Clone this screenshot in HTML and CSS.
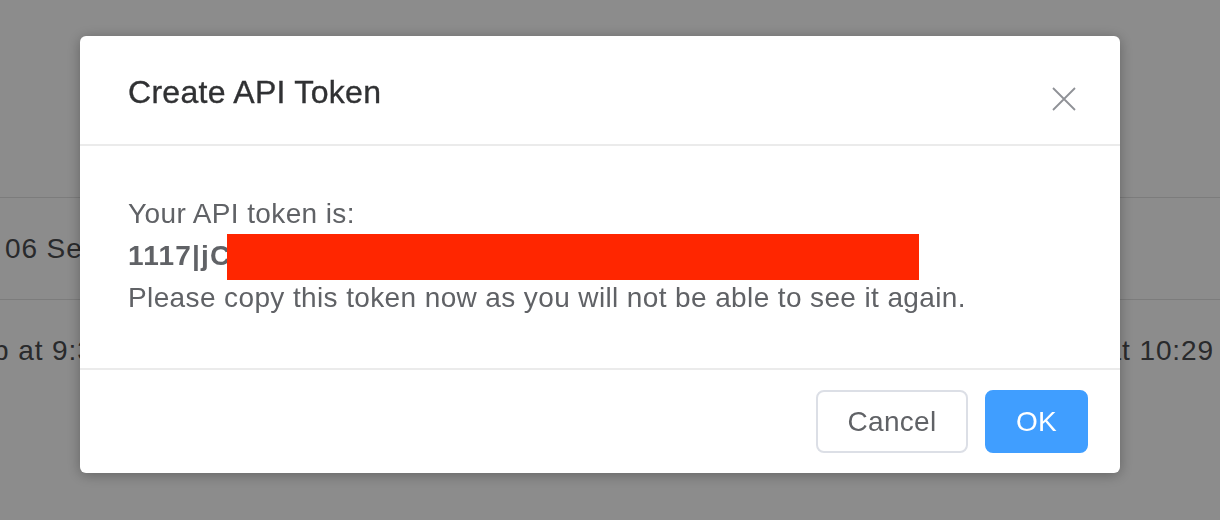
FILE: index.html
```html
<!DOCTYPE html>
<html lang="en">
<head>
<meta charset="utf-8">
<title>Create API Token</title>
<link rel="stylesheet" href="styles.css">
</head>
<body>
<div class="page">
  <div class="table">
    <div class="table-top"></div>
    <div class="row">
      <div class="cell cell-left">06 Sep 2023</div>
      <div class="cell cell-right"></div>
    </div>
    <div class="row">
      <div class="cell cell-left"><span class="shift">Sep at 9:30 AM</span></div>
      <div class="cell cell-right">06 Sep at 10:29</div>
    </div>
  </div>
</div>
<div class="overlay">
  <div class="dialog" role="dialog" aria-label="Create API Token">
    <div class="dialog-header">
      <span class="dialog-title">Create API Token</span>
      <button class="dialog-close" aria-label="Close">
        <svg width="24" height="24" viewBox="0 0 24 24"><path d="M1 1 L23 23 M23 1 L1 23" stroke="#8f9196" stroke-width="1.8" fill="none"/></svg>
      </button>
    </div>
    <div class="dialog-body">
      <div class="line">Your API token is:</div>
      <div class="line token"><strong>1117|jC</strong><span class="redact"></span></div>
      <div class="line">Please copy this token now as you will not be able to see it again.</div>
    </div>
    <div class="dialog-footer">
      <button class="btn btn-default">Cancel</button>
      <button class="btn btn-primary">OK</button>
    </div>
  </div>
</div>
</body>
</html>
```
FILE: styles.css
```css
* { box-sizing: border-box; }
html, body { margin: 0; padding: 0; }
body {
  font-family: "Liberation Sans", Arial, sans-serif;
  background: #ffffff;
  width: 1220px;
  height: 520px;
  overflow: hidden;
}
.page { width: 1220px; height: 520px; }
.table-top { height: 197px; }
.row {
  height: 102px;
  border-top: 1px solid #e2e2e2;
  display: flex;
  justify-content: space-between;
  align-items: center;
  font-size: 28px;
  letter-spacing: 0.9px;
  color: #4c4d50;
  overflow: hidden;
}
.cell-left { padding-left: 5px; white-space: nowrap; overflow: hidden; }
.cell-right { padding-right: 6px; white-space: nowrap; }
.shift { display: inline-block; margin-left: -48px; }

.overlay {
  position: fixed;
  inset: 0;
  background: rgba(0, 0, 0, 0.45);
  padding: 36px 0 0 80px;
}
.dialog {
  width: 1040px;
  background: #ffffff;
  border-radius: 6px;
  box-shadow: 0 2px 14px rgba(0, 0, 0, 0.3);
}
.dialog-header {
  display: flex;
  justify-content: space-between;
  align-items: flex-start;
  padding: 32px 44px 28px 48px;
  border-bottom: 2px solid #ebebeb;
}
.dialog-title {
  font-size: 32px;
  line-height: 48px;
  letter-spacing: 0.3px;
  color: #303133;
  -webkit-text-stroke: 0.35px #303133;
}
.dialog-close {
  border: 0;
  background: none;
  padding: 0;
  margin-top: 19px;
  width: 24px;
  height: 24px;
  display: flex;
}
.dialog-body {
  padding: 48px 48px 50px;
  font-size: 28px;
  letter-spacing: 0.38px;
  color: #606266;
}
.line { line-height: 40px; }
.token {
  line-height: 44px;
  position: relative;
}
.token strong { font-weight: bold; letter-spacing: 1.2px; }
.redact {
  position: absolute;
  left: 99px;
  top: 0;
  width: 692px;
  height: 46px;
  background: #ff2600;
}
.dialog-footer {
  display: flex;
  justify-content: flex-end;
  gap: 17px;
  padding: 20px 32px 20px;
  border-top: 2px solid #ebebeb;
}
.btn {
  height: 63px;
  border-radius: 8px;
  font-family: "Liberation Sans", Arial, sans-serif;
  font-size: 28px;
  letter-spacing: 0.3px;
  padding: 0;
  display: flex;
  align-items: center;
  justify-content: center;
}
.btn-default {
  width: 152px;
  background: #ffffff;
  border: 2px solid #dcdfe6;
  color: #606266;
}
.btn-primary {
  width: 103px;
  background: #409eff;
  border: 2px solid #409eff;
  color: #ffffff;
}
```
